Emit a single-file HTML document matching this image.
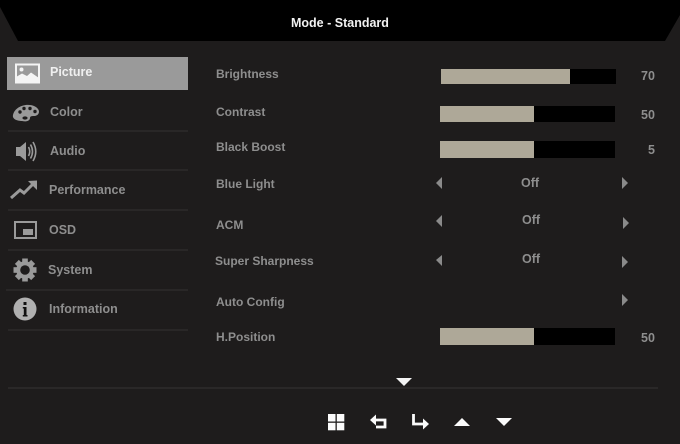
<!DOCTYPE html>
<html><head><meta charset="utf-8"><style>
html,body{margin:0;padding:0;background:#1e1c1c}
#p{position:relative;width:680px;height:444px;overflow:hidden;background:#1e1c1c;font-family:"Liberation Sans",sans-serif;font-weight:bold;font-size:12.5px;color:#8e8e8e;filter:blur(.35px)}
#p svg.a{position:absolute;left:0;top:0}
.t{position:absolute;line-height:16px;white-space:nowrap}
.r{font-size:12px}
.c{position:absolute;background:#292727;height:2px}
.b{position:absolute;background:#000;width:175px;height:16px}
.b i{display:block;height:100%;background:#aea898}
</style></head><body><div id="p">
<svg class="a" width="680" height="444" viewBox="0 0 680 444">
<polygon points="0,0 680,0 680,15 665,41 18,41 0,7" fill="#000"/>
<rect x="7" y="57" width="181" height="33" fill="#9a9a9a"/>
<!-- picture -->
<rect x="16" y="64.5" width="23" height="18" fill="none" stroke="#f4f4f4" stroke-width="2"/>
<circle cx="21.5" cy="69.5" r="2" fill="#f4f4f4"/>
<path d="M16 82 L16 77 L22 73.5 L27 76 L31 72.5 L39 78 L39 82 Z" fill="#f4f4f4"/>
<!-- palette -->
<path d="M13 115 C15 106 27 103 34 106 C41 109 40 115 35 116 C32 116 30 116 30 118 C30 121 26 122 22 121 C17 121 12 119 13 115 Z" fill="#9a9a9a"/>
<circle cx="20" cy="112" r="1.7" fill="#1e1c1c"/><circle cx="24" cy="108.5" r="1.7" fill="#1e1c1c"/><circle cx="30" cy="108.5" r="1.7" fill="#1e1c1c"/><circle cx="35" cy="111.5" r="1.7" fill="#1e1c1c"/><ellipse cx="25" cy="118" rx="2.6" ry="1.6" fill="#1e1c1c"/>
<!-- audio -->
<path d="M16 147 H20 L26 142 V161 L20 156 H16 Z" fill="#9a9a9a"/>
<path d="M28.5 147 Q31 151.500 28.500 156" fill="none" stroke="#9a9a9a" stroke-width="1.600"/>
<path d="M30.500 144.500 Q34.500 151.500 30.500 158.500" fill="none" stroke="#9a9a9a" stroke-width="1.600"/>
<path d="M33 142 Q38.500 151.500 33 161" fill="none" stroke="#9a9a9a" stroke-width="1.600"/>
<!-- performance -->
<path d="M11 198 L20 190 L24 193 L34 183" fill="none" stroke="#9a9a9a" stroke-width="3"/>
<polygon points="28,181 37,180.500 37,190" fill="#9a9a9a"/>
<!-- osd -->
<rect x="15" y="222" width="21" height="16" fill="none" stroke="#9a9a9a" stroke-width="2"/>
<rect x="23" y="229" width="10" height="6" fill="#9a9a9a"/>
<!-- gear -->
<g transform="translate(25,270)" fill="#9a9a9a"><g><rect x="-2.800" y="-11.500" width="5.600" height="23"/><rect x="-2.800" y="-11.500" width="5.600" height="23" transform="rotate(45)"/><rect x="-2.800" y="-11.500" width="5.600" height="23" transform="rotate(90)"/><rect x="-2.800" y="-11.500" width="5.600" height="23" transform="rotate(135)"/></g><circle r="8.800"/><circle r="4.800" fill="#1e1c1c"/></g>
<!-- info -->
<circle cx="25" cy="309" r="11.500" fill="#b0b0b0"/>
<rect x="23.500" y="302" width="3" height="3" fill="#111"/>
<path d="M22.800 307 H26.500 V315 H27.500 V316.500 H22.800 V315 H23.800 V308.500 H22.800 Z" fill="#111"/>
<!-- row arrows -->
<g fill="#8a8a8a">
<polygon points="436,183 442,177 442,189"/><polygon points="622,177 628,183 622,189"/>
<polygon points="436,221 442,215 442,227"/><polygon points="623,217 629,223 623,229"/>
<polygon points="436,260 442,255 442,266"/><polygon points="622,256 628,262 622,268"/>
<polygon points="622,294 628,300 622,306"/>
</g>
<!-- footer -->
<rect x="8" y="387" width="650" height="2" fill="#2a2828"/>
<polygon points="396,378 412,378 404,386" fill="#f4f4f4"/>
<g fill="#fbfbfb"><rect x="328" y="414" width="7.500" height="7.500"/><rect x="336.800" y="414" width="7.500" height="7.500"/><rect x="328" y="422.800" width="7.500" height="7.500"/><rect x="336.800" y="422.800" width="7.500" height="7.500"/></g>
<path d="M374 420 H385 V427 H376" fill="none" stroke="#fbfbfb" stroke-width="2.800"/>
<polygon points="370,420 376,414.500 376,425.500" fill="#fbfbfb"/>
<path d="M413.500 414 V424 H424" fill="none" stroke="#fbfbfb" stroke-width="2.800"/>
<polygon points="429,424 423,418.500 423,429.500" fill="#fbfbfb"/>
<polygon points="454,426 470,426 462,418" fill="#fbfbfb"/>
<polygon points="496,418 512,418 504,426" fill="#fbfbfb"/>
</svg>

<div class="c" style="left:8px;top:130px;width:180px"></div>
<div class="c" style="left:8px;top:169px;width:180px"></div>
<div class="c" style="left:8px;top:209px;width:180px"></div>
<div class="c" style="left:8px;top:249px;width:180px"></div>
<div class="c" style="left:6px;top:289px;width:182px"></div>
<div class="c" style="left:8px;top:329px;width:180px"></div>

<div class="t" style="left:291px;top:15px;color:#f2f2f2">Mode - Standard</div>

<div class="t" style="left:50px;top:64px;color:#f0f0f0">Picture</div>
<div class="t" style="left:50px;top:104px">Color</div>
<div class="t" style="left:50px;top:143px">Audio</div>
<div class="t" style="left:49px;top:182px">Performance</div>
<div class="t" style="left:49px;top:222px">OSD</div>
<div class="t" style="left:48px;top:262px">System</div>
<div class="t" style="left:49px;top:301px">Information</div>

<div class="t r" style="left:216px;top:66px">Brightness</div>
<div class="t r" style="left:216px;top:104px">Contrast</div>
<div class="t r" style="left:216px;top:139px">Black Boost</div>
<div class="t r" style="left:216px;top:176px">Blue Light</div>
<div class="t r" style="left:216px;top:217px">ACM</div>
<div class="t r" style="left:215px;top:253px">Super Sharpness</div>
<div class="t r" style="left:216px;top:294px">Auto Config</div>
<div class="t r" style="left:216px;top:329px">H.Position</div>

<div class="b" style="left:441px;top:69px;height:15px"><i style="width:128.500px"></i></div>
<div class="b" style="left:440px;top:106px"><i style="width:93.500px"></i></div>
<div class="b" style="left:440px;top:141px;height:17px"><i style="width:93.500px"></i></div>
<div class="b" style="left:440px;top:328px;height:17px"><i style="width:93.500px"></i></div>

<div class="t" style="left:641px;top:68px">70</div>
<div class="t" style="left:641px;top:107px">50</div>
<div class="t" style="left:648px;top:142px">5</div>
<div class="t" style="left:641px;top:330px">50</div>

<div class="t" style="left:521px;top:175px">Off</div>
<div class="t" style="left:522px;top:212px">Off</div>
<div class="t" style="left:522px;top:251px">Off</div>
</div></body></html>
